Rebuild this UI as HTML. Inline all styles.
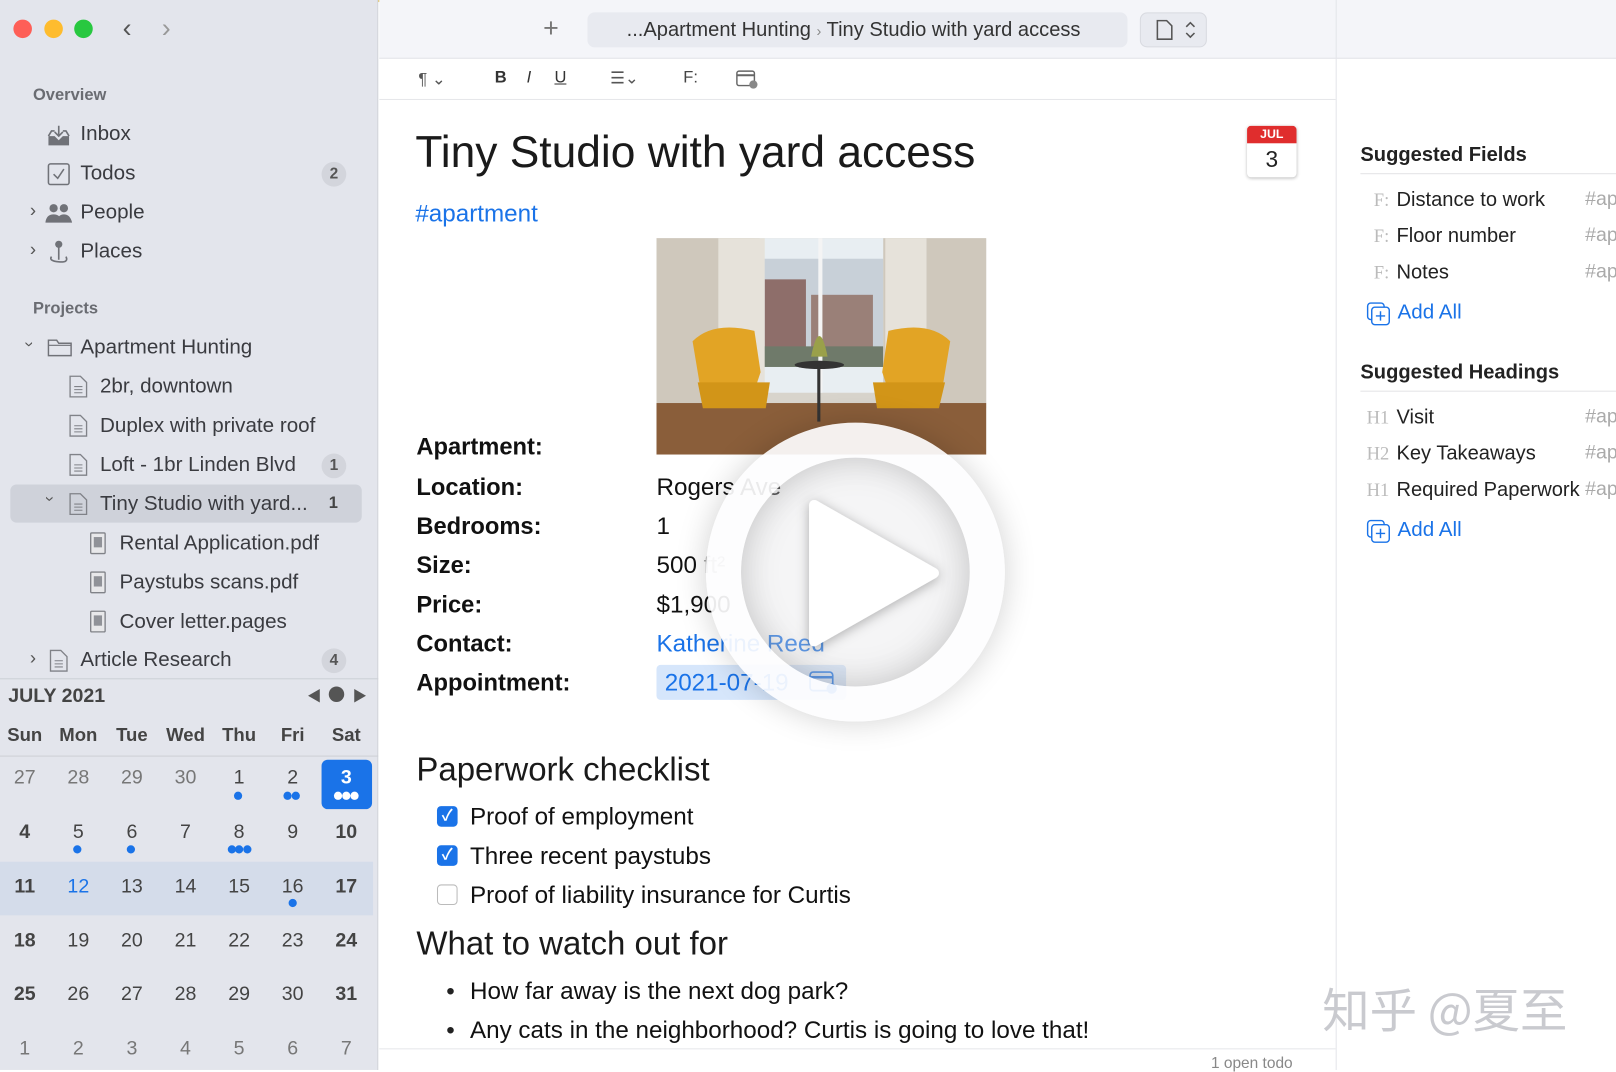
<!DOCTYPE html>
<html><head><meta charset="utf-8"><style>
*{box-sizing:border-box;margin:0;padding:0}
html,body{width:1616px;height:1070px;overflow:hidden;background:#fff}
#w{position:absolute;left:0;top:0;width:1568px;height:1038px;transform:scale(1.03061,1.0308);transform-origin:0 0;font-family:"Liberation Sans","Noto Sans CJK SC",sans-serif;color:#222}
.a{position:absolute;white-space:nowrap}
#sb{position:absolute;left:0;top:0;width:367px;height:1038px;background:#e3e5ec;border-right:1px solid #d2d4da}
.sh{font-size:16px;color:#6a6c72;font-weight:bold}
.si{font-size:20px;color:#3a3b40}
.badge{position:absolute;width:24px;height:24px;border-radius:12px;background:#d3d5dc;color:#555;font-size:15px;font-weight:bold;text-align:center;line-height:24px}
.cal{font-size:19px;color:#444;width:52px;text-align:center}
.dot{position:absolute;width:8px;height:8px;border-radius:4px;background:#1a73e8}
.lbl{font-size:23px;font-weight:bold;color:#111;top:0}
.val{font-size:23.5px;color:#111}
.rf{font-size:19.5px;color:#222}
.gr{font-family:"Liberation Serif",serif;color:#bbb;font-size:18px}
.hs{font-size:19px;color:#aaa}
</style></head><body><div id="w">
<div style="position:absolute;left:0;top:0;width:1568px;height:2px;background:#e6c35a"></div>
<div id="sb">
 <div class="a" style="left:13px;top:19px;width:18px;height:18px;border-radius:9px;background:#fe5f57"></div>
 <div class="a" style="left:43px;top:19px;width:18px;height:18px;border-radius:9px;background:#febc2e"></div>
 <div class="a" style="left:72px;top:19px;width:18px;height:18px;border-radius:9px;background:#28c840"></div>
 <div class="a" style="left:119px;top:12px;font-size:26px;color:#555">&#8249;</div>
 <div class="a" style="left:157px;top:12px;font-size:26px;color:#999">&#8250;</div>
 <div class="a sh" style="left:32px;top:84px">Overview</div>
 <svg class="a" style="left:45px;top:120px" width="24" height="22"><path d="M2 12h6l4 4 4-4h6v9H2z" fill="#707278"/><path d="M2 12l3-5h3M22 12l-3-5h-3M12 2v10M8 8l4 4 4-4" stroke="#707278" stroke-width="1.6" fill="none"/></svg>
 <div class="a si" style="left:78px;top:119px">Inbox</div>
 <svg class="a" style="left:46px;top:158px" width="22" height="22"><rect x="1" y="1" width="20" height="20" rx="2" fill="none" stroke="#707278" stroke-width="1.5"/><path d="M6 11l4 4 6-9" stroke="#707278" stroke-width="1.5" fill="none"/></svg>
 <div class="a si" style="left:78px;top:157px">Todos</div>
 <div class="badge" style="left:312px;top:157px">2</div>
 <div class="a" style="left:29px;top:194px;color:#555;font-size:18px">&#8250;</div>
 <svg class="a" style="left:44px;top:197px" width="26" height="20"><circle cx="8" cy="5" r="4" fill="#707278"/><circle cx="18" cy="5" r="4" fill="#707278"/><path d="M0 19q1-8 8-8t8 8zM11 19q1-8 7-8t8 8z" fill="#707278"/></svg>
 <div class="a si" style="left:78px;top:195px">People</div>
 <div class="a" style="left:29px;top:232px;color:#555;font-size:18px">&#8250;</div>
 <svg class="a" style="left:46px;top:233px" width="22" height="24"><circle cx="11" cy="4" r="3.5" fill="#707278"/><path d="M11 7v12M4 16q-3 4 7 5t7-5" stroke="#707278" stroke-width="1.6" fill="none"/></svg>
 <div class="a si" style="left:78px;top:233px">Places</div>
 <div class="a sh" style="left:32px;top:291px">Projects</div>
 <div class="a" style="left:25px;top:325px;color:#555;font-size:16px;transform:rotate(90deg)">&#8250;</div>
 <svg class="a" style="left:46px;top:328px" width="24" height="18"><path d="M1 2h8l2 3h12v12H1z" fill="none" stroke="#707278" stroke-width="1.4"/><path d="M1 7h22" stroke="#707278" stroke-width="1.2"/></svg>
 <div class="a si" style="left:78px;top:326px">Apartment Hunting</div>
 <svg class="a" style="left:67px;top:364px" width="18" height="22"><path d="M1 1h10l6 6v14H1z" fill="none" stroke="#808288" stroke-width="1.3"/><path d="M5 11h8M5 14h8M5 17h8" stroke="#808288"/></svg>
 <div class="a si" style="left:97px;top:364px">2br, downtown</div>
 <svg class="a" style="left:67px;top:402px" width="18" height="22"><path d="M1 1h10l6 6v14H1z" fill="none" stroke="#808288" stroke-width="1.3"/><path d="M5 11h8M5 14h8M5 17h8" stroke="#808288"/></svg>
 <div class="a si" style="left:97px;top:402px">Duplex with private roof</div>
 <svg class="a" style="left:67px;top:440px" width="18" height="22"><path d="M1 1h10l6 6v14H1z" fill="none" stroke="#808288" stroke-width="1.3"/><path d="M5 11h8M5 14h8M5 17h8" stroke="#808288"/></svg>
 <div class="a si" style="left:97px;top:440px">Loft - 1br Linden Blvd</div>
 <div class="badge" style="left:312px;top:440px">1</div>
 <div class="a" style="left:10px;top:470px;width:341px;height:37px;border-radius:6px;background:#cfd2da"></div>
 <div class="a" style="left:45px;top:475px;color:#555;font-size:16px;transform:rotate(90deg)">&#8250;</div>
 <svg class="a" style="left:67px;top:478px" width="18" height="22"><path d="M1 1h10l6 6v14H1z" fill="none" stroke="#808288" stroke-width="1.3"/><path d="M5 11h8M5 14h8M5 17h8" stroke="#808288"/></svg>
 <div class="a si" style="left:97px;top:478px">Tiny Studio with yard...</div>
 <div class="a" style="left:319px;top:480px;font-size:16px;font-weight:bold;color:#444">1</div>
 <svg class="a" style="left:87px;top:516px" width="16" height="22"><rect x="1" y="1" width="14" height="20" rx="1" fill="#e8e8ea" stroke="#808288" stroke-width="1.3"/><rect x="4" y="5" width="8" height="10" fill="#909298"/></svg>
 <div class="a si" style="left:116px;top:516px">Rental Application.pdf</div>
 <svg class="a" style="left:87px;top:554px" width="16" height="22"><rect x="1" y="1" width="14" height="20" rx="1" fill="#e8e8ea" stroke="#808288" stroke-width="1.3"/><rect x="4" y="5" width="8" height="10" fill="#909298"/></svg>
 <div class="a si" style="left:116px;top:554px">Paystubs scans.pdf</div>
 <svg class="a" style="left:87px;top:592px" width="16" height="22"><rect x="1" y="1" width="14" height="20" rx="1" fill="#e8e8ea" stroke="#808288" stroke-width="1.3"/><rect x="4" y="5" width="8" height="10" fill="#909298"/></svg>
 <div class="a si" style="left:116px;top:592px">Cover letter.pages</div>
 <div class="a" style="left:29px;top:628px;color:#555;font-size:18px">&#8250;</div>
 <svg class="a" style="left:48px;top:630px" width="18" height="22"><path d="M1 1h10l6 6v14H1z" fill="none" stroke="#808288" stroke-width="1.3"/><path d="M5 11h8M5 14h8M5 17h8" stroke="#808288"/></svg>
 <div class="a si" style="left:78px;top:629px">Article Research</div>
 <div class="badge" style="left:312px;top:629px">4</div>
 <div class="a" style="left:0;top:658px;width:367px;height:1px;background:#cdd0d6"></div>
 <div class="a" style="left:8px;top:665px;font-size:19px;font-weight:bold;color:#444">JULY 2021</div>
 <div class="a" style="left:298px;top:665px;font-size:14px;color:#555">&#9664;</div>
 <div class="a" style="left:319px;top:666px;width:15px;height:15px;border-radius:8px;background:#555"></div>
 <div class="a" style="left:342px;top:665px;font-size:14px;color:#555">&#9654;</div>
 <div class="a" style="left:-2px;top:703px;font-weight:bold;color:#444;display:flex"><span class="cal" style="font-size:18px">Sun</span><span class="cal" style="font-size:18px">Mon</span><span class="cal" style="font-size:18px">Tue</span><span class="cal" style="font-size:18px">Wed</span><span class="cal" style="font-size:18px">Thu</span><span class="cal" style="font-size:18px">Fri</span><span class="cal" style="font-size:18px">Sat</span></div>
 <div class="a" style="left:0;top:733px;width:367px;height:1px;background:#cdd0d6"></div>
 <div class="a" style="left:0;top:836px;width:362px;height:52px;background:#d4dcea"></div>
 <div class="a" style="left:312px;top:737px;width:49px;height:48px;border-radius:6px;background:#1a73e8"></div>
 <div class="a" style="left:-2px;top:744px;display:flex"><span class="cal" style="color:#777">27</span><span class="cal" style="color:#777">28</span><span class="cal" style="color:#777">29</span><span class="cal" style="color:#777">30</span><span class="cal">1</span><span class="cal">2</span><span class="cal" style="color:#fff;font-weight:bold">3</span></div>
 <div class="a" style="left:-2px;top:797px;display:flex"><span class="cal" style="font-weight:bold">4</span><span class="cal">5</span><span class="cal">6</span><span class="cal">7</span><span class="cal">8</span><span class="cal">9</span><span class="cal" style="font-weight:bold">10</span></div>
 <div class="a" style="left:-2px;top:850px;display:flex"><span class="cal" style="font-weight:bold">11</span><span class="cal" style="color:#1a73e8">12</span><span class="cal">13</span><span class="cal">14</span><span class="cal">15</span><span class="cal">16</span><span class="cal" style="font-weight:bold">17</span></div>
 <div class="a" style="left:-2px;top:902px;display:flex"><span class="cal" style="font-weight:bold">18</span><span class="cal">19</span><span class="cal">20</span><span class="cal">21</span><span class="cal">22</span><span class="cal">23</span><span class="cal" style="font-weight:bold">24</span></div>
 <div class="a" style="left:-2px;top:954px;display:flex"><span class="cal" style="font-weight:bold">25</span><span class="cal">26</span><span class="cal">27</span><span class="cal">28</span><span class="cal">29</span><span class="cal">30</span><span class="cal" style="font-weight:bold">31</span></div>
 <div class="a" style="left:-2px;top:1007px;display:flex"><span class="cal" style="color:#777">1</span><span class="cal" style="color:#777">2</span><span class="cal" style="color:#777">3</span><span class="cal" style="color:#777">4</span><span class="cal" style="color:#777">5</span><span class="cal" style="color:#777">6</span><span class="cal" style="color:#777">7</span></div>
 <div class="dot" style="left:227px;top:768px"></div>
 <div class="dot" style="left:275px;top:768px"></div><div class="dot" style="left:283px;top:768px"></div>
 <div class="dot" style="left:324px;top:768px;background:#fff"></div><div class="dot" style="left:332px;top:768px;background:#fff"></div><div class="dot" style="left:340px;top:768px;background:#fff"></div>
 <div class="dot" style="left:71px;top:820px"></div><div class="dot" style="left:123px;top:820px"></div>
 <div class="dot" style="left:221px;top:820px"></div><div class="dot" style="left:228px;top:820px"></div><div class="dot" style="left:236px;top:820px"></div>
 <div class="dot" style="left:280px;top:872px"></div>
</div>
<!-- toolbar -->
<div class="a" style="left:368px;top:0;width:1200px;height:57px;background:#f4f5f9;border-bottom:1px solid #e2e3e8"></div>
<div class="a" style="left:1296px;top:0;width:1px;height:1038px;background:#e4e5ea"></div>
<div class="a" style="left:527px;top:12px;font-size:26px;color:#777">+</div>
<div class="a" style="left:570px;top:12px;width:524px;height:34px;border-radius:7px;background:#e8eaf0"></div>
<div class="a" style="left:608px;top:18px;font-size:19.5px;color:#333">...Apartment Hunting <span style="color:#888;font-size:14px">&#8250;</span> Tiny Studio with yard access</div>
<div class="a" style="left:1106px;top:12px;width:65px;height:34px;border-radius:7px;background:#e8eaf0;border:1px solid #d8dae0"></div>
<svg class="a" style="left:1121px;top:19px" width="40" height="20"><path d="M2 1h9l5 5v13H2z" fill="none" stroke="#555" stroke-width="1.5"/><path d="M30 7l4-4 4 4M30 13l4 4 4-4" stroke="#555" stroke-width="1.5" fill="none"/></svg>
<!-- format bar -->
<div class="a" style="left:368px;top:96px;width:928px;height:1px;background:#e6e7ea"></div>
<div class="a" style="left:406px;top:67px;font-size:16px;color:#555">&para; &#8964;</div>
<div class="a" style="left:480px;top:67px;font-size:16px;font-weight:bold;color:#333">B</div>
<div class="a" style="left:511px;top:67px;font-size:16px;font-style:italic;color:#333">I</div>
<div class="a" style="left:538px;top:67px;font-size:16px;text-decoration:underline;color:#333">U</div>
<div class="a" style="left:592px;top:66px;font-size:16px;color:#555">&#9776;&#8964;</div>
<div class="a" style="left:663px;top:67px;font-size:16px;color:#444">F:</div>
<svg class="a" style="left:714px;top:67px" width="22" height="20"><rect x="1" y="2" width="17" height="14" rx="2" fill="none" stroke="#666" stroke-width="1.4"/><path d="M1 6h17" stroke="#666" stroke-width="2"/><circle cx="17" cy="15" r="4" fill="#888"/></svg>
<!-- content -->
<div class="a" style="left:403px;top:124px;font-size:43px;color:#1a1a1a">Tiny Studio with yard access</div>
<div class="a" style="left:1210px;top:122px;width:48px;height:50px;border-radius:4px;background:#fff;box-shadow:0 1px 3px rgba(0,0,0,.25);overflow:hidden"><div style="background:#e02d2d;color:#fff;font-size:12px;font-weight:bold;text-align:center;height:17px;line-height:17px">JUL</div><div style="text-align:center;font-size:22px;color:#222;line-height:32px">3</div></div>
<div class="a" style="left:403px;top:194px;font-size:23.5px;color:#1a73e8">#apartment</div>
<!-- photo -->
<svg class="a" style="left:637px;top:231px" width="320" height="210">
<rect width="320" height="210" fill="#d8d4cc"/>
<rect x="95" y="0" width="130" height="150" fill="#e8eef2"/>
<rect x="100" y="20" width="120" height="90" fill="#c8d0d8"/>
<rect x="105" y="40" width="40" height="70" fill="#8e6e6a"/><rect x="150" y="55" width="60" height="55" fill="#9a8078"/>
<rect x="100" y="105" width="120" height="20" fill="#6f7a6a"/>
<rect x="157" y="0" width="4" height="150" fill="#f4f4f4"/>
<rect x="0" y="0" width="100" height="165" fill="#cfc8bc"/><rect x="60" y="0" width="45" height="165" fill="#e6e2da"/>
<rect x="220" y="0" width="100" height="165" fill="#cfc8bc"/><rect x="222" y="0" width="40" height="165" fill="#e6e2da"/>
<rect x="0" y="160" width="320" height="50" fill="#8a5e3a"/>
<path d="M35 100q20-20 60-10l6 40-10 30H45z" fill="#e2a425"/><path d="M40 140h70l-4 25H45z" fill="#d29518"/>
<path d="M285 100q-20-20-60-10l-6 40 10 30h46z" fill="#e2a425"/><path d="M280 140h-70l4 25h60z" fill="#d29518"/>
<ellipse cx="158" cy="123" rx="24" ry="4" fill="#333"/><rect x="156" y="123" width="3" height="55" fill="#333"/>
<path d="M150 115q8-40 16 0z" fill="#9aa04a"/>
</svg>
<div class="a lbl" style="left:404px;top:420px">Apartment:</div>
<div class="a lbl" style="left:404px;top:459px">Location:</div><div class="a val" style="left:637px;top:459px">Rogers Ave</div>
<div class="a lbl" style="left:404px;top:497px">Bedrooms:</div><div class="a val" style="left:637px;top:497px">1</div>
<div class="a lbl" style="left:404px;top:535px">Size:</div><div class="a val" style="left:637px;top:535px">500 <span style="color:#aaa">ft&sup2;</span></div>
<div class="a lbl" style="left:404px;top:573px">Price:</div><div class="a val" style="left:637px;top:573px">$1,900</div>
<div class="a lbl" style="left:404px;top:611px">Contact:</div><div class="a val" style="left:637px;top:611px;color:#1a73e8">Katherine Reed</div>
<div class="a lbl" style="left:404px;top:649px">Appointment:</div>
<div class="a" style="left:637px;top:645px;width:184px;height:34px;border-radius:4px;background:#d6e6fb"></div>
<div class="a val" style="left:645px;top:649px;color:#1a73e8">2021-07-19</div>
<svg class="a" style="left:785px;top:650px" width="28" height="24"><rect x="1" y="2" width="22" height="18" rx="3" fill="none" stroke="#1a73e8" stroke-width="1.6"/><path d="M1 7h22" stroke="#1a73e8" stroke-width="2.5"/><circle cx="22" cy="18" r="5" fill="#1a73e8"/></svg>
<!-- play overlay -->
<div class="a" style="left:685px;top:410px;width:290px;height:290px;border-radius:50%;border:34px solid rgba(255,255,255,.88);background:rgba(225,225,228,.35);box-shadow:0 0 30px rgba(0,0,0,.18), inset 0 0 35px rgba(0,0,0,.22)"></div>
<svg class="a" style="left:770px;top:470px" width="160" height="170" style="overflow:visible"><defs><filter id="sh" x="-30%" y="-30%" width="160%" height="160%"><feDropShadow dx="0" dy="2" stdDeviation="6" flood-color="#000" flood-opacity=".3"/></filter></defs><path d="M20 20L136 86L20 152z" fill="#fff" stroke="#fff" stroke-width="10" stroke-linejoin="round" filter="url(#sh)"/></svg>
<div class="a" style="left:404px;top:728px;font-size:32px;color:#1a1a1a">Paperwork checklist</div>
<div class="a" style="left:424px;top:782px;width:20px;height:20px;border-radius:4px;background:#1a73e8;color:#fff;font-size:15px;text-align:center;line-height:20px;font-weight:bold">&#10003;</div>
<div class="a val" style="left:456px;top:779px">Proof of employment</div>
<div class="a" style="left:424px;top:820px;width:20px;height:20px;border-radius:4px;background:#1a73e8;color:#fff;font-size:15px;text-align:center;line-height:20px;font-weight:bold">&#10003;</div>
<div class="a val" style="left:456px;top:817px">Three recent paystubs</div>
<div class="a" style="left:424px;top:858px;width:20px;height:20px;border-radius:4px;border:1.5px solid #bbb;background:#fff"></div>
<div class="a val" style="left:456px;top:855px">Proof of liability insurance for Curtis</div>
<div class="a" style="left:404px;top:897px;font-size:32px;color:#1a1a1a">What to watch out for</div>
<div class="a" style="left:433px;top:948px;font-size:23.5px">&bull;</div><div class="a val" style="left:456px;top:948px">How far away is the next dog park?</div>
<div class="a" style="left:433px;top:986px;font-size:23.5px">&bull;</div><div class="a val" style="left:456px;top:986px">Any cats in the neighborhood? Curtis is going to love that!</div>
<div class="a" style="left:368px;top:1017px;width:928px;height:1px;background:#e6e7ea"></div>
<div class="a" style="left:1175px;top:1023px;font-size:15px;color:#888">1 open todo</div>
<!-- right panel -->
<div class="a" style="left:1320px;top:139px;font-size:19.5px;font-weight:bold;color:#222">Suggested Fields</div>
<div class="a" style="left:1320px;top:168px;width:248px;height:1px;background:#e3e3e6"></div>
<div class="a gr" style="left:1333px;top:184px">F:</div><div class="a rf" style="left:1355px;top:183px">Distance to work</div><div class="a hs" style="left:1538px;top:183px">#ap</div>
<div class="a gr" style="left:1333px;top:219px">F:</div><div class="a rf" style="left:1355px;top:218px">Floor number</div><div class="a hs" style="left:1538px;top:218px">#ap</div>
<div class="a gr" style="left:1333px;top:254px">F:</div><div class="a rf" style="left:1355px;top:253px">Notes</div><div class="a hs" style="left:1538px;top:253px">#ap</div>
<svg class="a" style="left:1326px;top:293px" width="24" height="24"><rect x="1" y="1" width="16" height="16" rx="3" fill="none" stroke="#1a73e8" stroke-width="1.4"/><rect x="5" y="5" width="17" height="17" rx="3" fill="#fff" stroke="#1a73e8" stroke-width="1.4"/><path d="M13.5 9v9M9 13.5h9" stroke="#1a73e8" stroke-width="1.4"/></svg>
<div class="a" style="left:1356px;top:292px;font-size:20px;color:#1a73e8">Add All</div>
<div class="a" style="left:1320px;top:350px;font-size:19.5px;font-weight:bold;color:#222">Suggested Headings</div>
<div class="a" style="left:1320px;top:379px;width:248px;height:1px;background:#e3e3e6"></div>
<div class="a gr" style="left:1326px;top:395px">H1</div><div class="a rf" style="left:1355px;top:394px">Visit</div><div class="a hs" style="left:1538px;top:394px">#ap</div>
<div class="a gr" style="left:1326px;top:430px">H2</div><div class="a rf" style="left:1355px;top:429px">Key Takeaways</div><div class="a hs" style="left:1538px;top:429px">#ap</div>
<div class="a gr" style="left:1326px;top:465px">H1</div><div class="a rf" style="left:1355px;top:464px">Required Paperwork</div><div class="a hs" style="left:1538px;top:464px;background:#fff">#ap</div>
<svg class="a" style="left:1326px;top:504px" width="24" height="24"><rect x="1" y="1" width="16" height="16" rx="3" fill="none" stroke="#1a73e8" stroke-width="1.4"/><rect x="5" y="5" width="17" height="17" rx="3" fill="#fff" stroke="#1a73e8" stroke-width="1.4"/><path d="M13.5 9v9M9 13.5h9" stroke="#1a73e8" stroke-width="1.4"/></svg>
<div class="a" style="left:1356px;top:503px;font-size:20px;color:#1a73e8">Add All</div>
<div class="a" style="left:1283px;top:945px;font-size:46px;color:#c9cacf;font-family:'Noto Sans CJK SC','Liberation Sans',sans-serif">知乎 @夏至</div>
</div></body></html>
